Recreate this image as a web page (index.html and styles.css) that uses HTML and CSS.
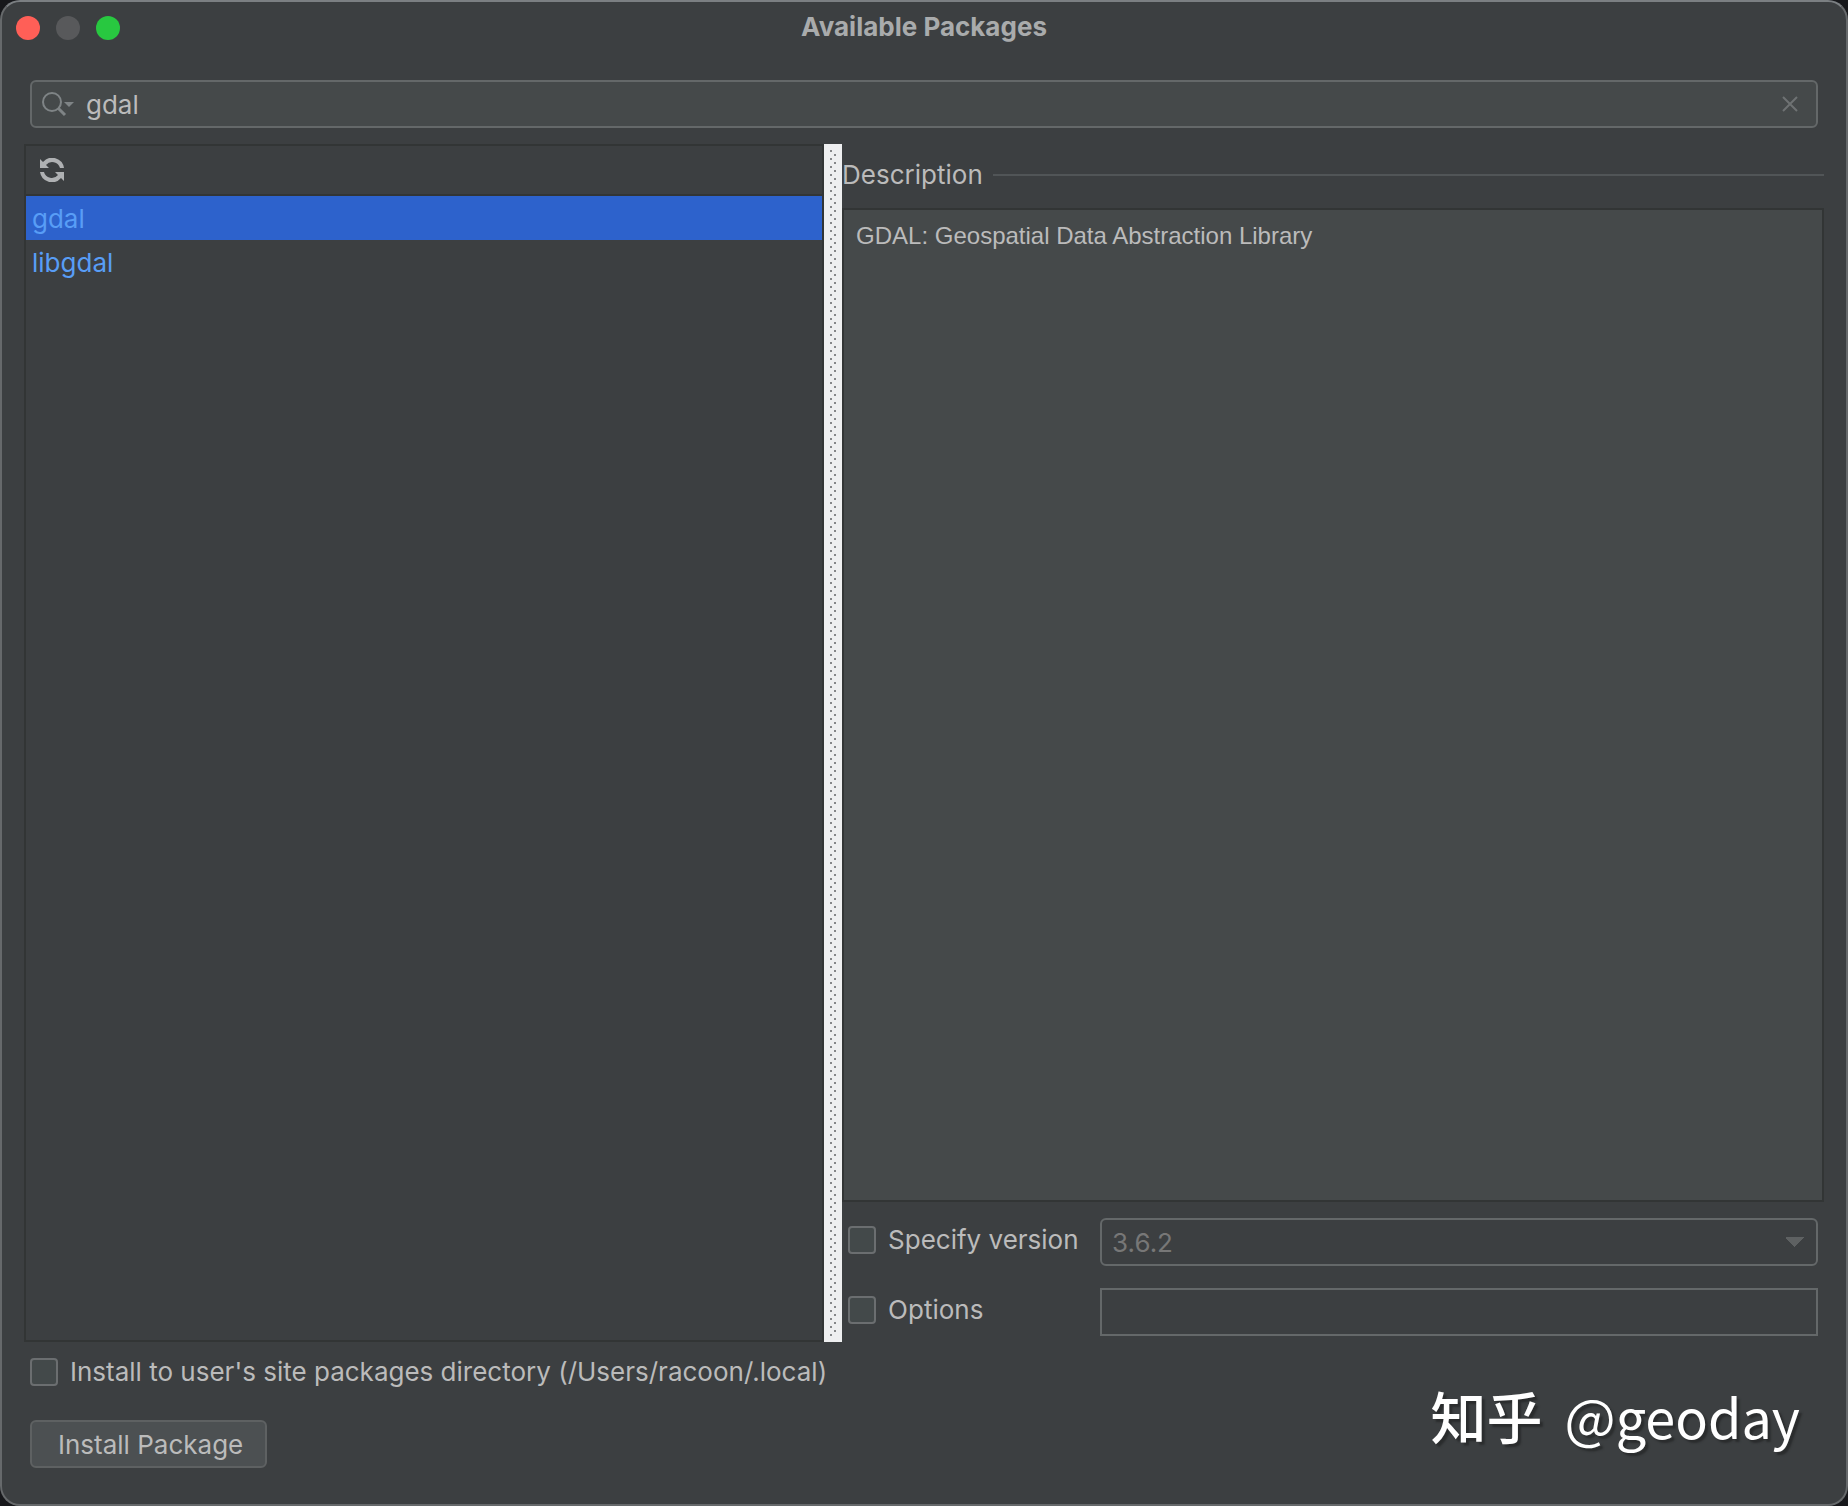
FILE: index.html
```
<!DOCTYPE html>
<html lang="en">
<head>
    <meta charset="UTF-8">
    <meta name="viewport" content="width=device-width, initial-scale=1.0">
    <title>Available Packages</title>
    <link rel="stylesheet" href="styles.css">
</head>
<body>
    <div class="window">
        <header class="title-bar">
            <div class="lights">
                <button type="button" class="light close" aria-label="Close"></button>
                <button type="button" class="light minimize" aria-label="Minimize" disabled></button>
                <button type="button" class="light zoom" aria-label="Zoom"></button>
            </div>
            <h1>Available Packages</h1>
        </header>

        <div class="search-box">
            <svg class="search-icon" width="34" height="26" viewBox="0 0 34 26">
                <circle cx="10" cy="11" r="9" fill="none" stroke="#7f8486" stroke-width="2"/>
                <path d="M16 17l7 7" stroke="#7f8486" stroke-width="3"/>
                <path d="M22 11h10l-5 5z" fill="#7f8486"/>
            </svg>
            <input type="text" id="search" value="gdal" aria-label="Search packages">
            <button type="button" class="clear-btn" aria-label="Clear">
                <svg width="16" height="16" viewBox="0 0 16 16">
                    <path d="M1 1l14 14M15 1L1 15" stroke="#6e7273" stroke-width="2"/>
                </svg>
            </button>
        </div>

        <main class="panes">
            <section class="package-pane">
                <div class="toolbar">
                    <button type="button" class="refresh-btn" aria-label="Reload list of packages">
                        <svg width="24" height="24" viewBox="0 0 24 24" fill="#afb1b3">
                            <path d="M0 1l3 3A12 12 0 0 1 24 10h-4A8 8 0 0 0 6 7l3 3H0z"/>
                            <path d="M24 23l-3-3A12 12 0 0 1 0 14h4A8 8 0 0 0 18 17l-3-3h9z"/>
                        </svg>
                    </button>
                </div>
                <ul class="package-list">
                    <li class="selected"><a href="#gdal">gdal</a></li>
                    <li><a href="#libgdal">libgdal</a></li>
                </ul>
            </section>

            <div class="splitter"></div>

            <section class="detail-pane">
                <h2>Description</h2>
                <div class="description">GDAL: Geospatial Data Abstraction Library</div>
                <div class="option-row">
                    <label class="check"><input type="checkbox" id="specify">Specify version</label>
                    <select class="field version" aria-label="Version" disabled>
                        <option>3.6.2</option>
                    </select>
                </div>
                <div class="option-row">
                    <label class="check"><input type="checkbox" id="options">Options</label>
                    <input type="text" class="field" aria-label="Options" disabled>
                </div>
            </section>
        </main>

        <footer class="actions">
            <label class="check"><input type="checkbox" id="userSite">Install to user's site packages directory (/Users/racoon/.local)</label>
            <button type="button" class="install-btn">Install Package</button>
        </footer>

        <div class="watermark"><b>知乎</b><span>@geoday</span></div>
    </div>
</body>
</html>
```
FILE: styles.css
```
* {
    margin: 0;
    padding: 0;
    box-sizing: border-box;
}

body {
    background: #17181b;
    color: #bbbbbb;
    font-family: Inter, "Noto Sans CJK SC", sans-serif;
    font-size: 26px;
    line-height: 32px;
}

button,
input,
select {
    font: inherit;
    color: inherit;
    outline: none;
}

.window {
    position: relative;
    display: flex;
    flex-direction: column;
    min-height: 100vh;
    padding: 0 22px 36px;
    background: #3c3f41;
    border: 2px solid #66696b;
    border-top-color: #7b7f82;
    border-radius: 20px;
}

/* title bar */
.title-bar {
    display: grid;
    grid-template-columns: 1fr auto 1fr;
    align-items: center;
    height: 52px;
    margin: 0 -8px 26px;
}

.lights {
    display: flex;
    gap: 16px;
}

.light {
    width: 24px;
    height: 24px;
    border: none;
    border-radius: 50%;
}

.close {
    background: #ff5f57;
}

.minimize {
    background: #58595b;
}

.zoom {
    background: #28c840;
}

.title-bar h1 {
    padding-bottom: 2px;
    font-size: 26px;
    font-weight: 700;
    color: #a9abac;
}

/* search */
.search-box {
    display: flex;
    align-items: center;
    height: 48px;
    margin: 0 6px 16px;
    padding: 0 18px 0 10px;
    background: #45494a;
    border: 2px solid #646869;
    border-radius: 6px;
}

.search-box input {
    flex: 1;
    min-width: 0;
    padding: 2px 10px 0;
    background: none;
    border: none;
}

.clear-btn,
.refresh-btn {
    display: flex;
    background: none;
    border: none;
}

/* panes */
.panes {
    flex: 1;
    display: grid;
    grid-template-columns: 44fr 18px 54fr;
}

.package-pane {
    border: 2px solid #323535;
}

.toolbar {
    display: flex;
    align-items: center;
    height: 50px;
    padding: 0 14px;
    border-bottom: 2px solid #323535;
}

.package-list {
    list-style: none;
}

.package-list li {
    height: 44px;
    padding: 0 6px;
    line-height: 46px;
}

.package-list .selected {
    background: #2d62cc;
}

.package-list a {
    color: #589df6;
    text-decoration: none;
}

/* two staggered columns of grip dots */
.splitter {
    background:
        repeating-linear-gradient(#858789 0 2px, transparent 2px 8px) 6px 6px / 2px calc(100% - 12px) no-repeat,
        repeating-linear-gradient(#858789 0 2px, transparent 2px 8px) 10px 10px / 2px calc(100% - 16px) no-repeat,
        #eeeff0;
}

.detail-pane {
    display: flex;
    flex-direction: column;
    min-width: 0;
}

.detail-pane h2 {
    display: flex;
    align-items: center;
    gap: 10px;
    height: 64px;
    padding-bottom: 2px;
    font-size: 26px;
    font-weight: 400;
}

.detail-pane h2::after {
    content: "";
    flex: 1;
    height: 2px;
    background: #515557;
}

.description {
    flex: 1;
    margin-bottom: 16px;
    padding: 10px 12px;
    background: #45494a;
    border: 2px solid #323535;
    font-family: "Liberation Sans", sans-serif;
    font-size: 24px;
}

.option-row {
    display: grid;
    grid-template-columns: 252px 1fr;
    align-items: center;
    padding: 0 6px;
    margin-bottom: 22px;
}

.option-row:last-child {
    margin-bottom: 6px;
}

.check {
    display: flex;
    align-items: center;
    gap: 12px;
    white-space: nowrap;
}

.option-row .check {
    padding-bottom: 4px;
}

.check input {
    appearance: none;
    width: 28px;
    height: 28px;
    background: #43494a;
    border: 2px solid #6b6e70;
    border-radius: 4px;
}

.check input:checked {
    background: #2d62cc;
}

.field {
    width: 100%;
    height: 48px;
    padding: 2px 10px 0;
    background: #3c3f41;
    border: 2px solid #646869;
    color: #777777;
    opacity: 1;
}

.version {
    appearance: none;
    border-radius: 6px;
    background: #3c3f41 conic-gradient(from -45deg at 50% 100%, #5e6162 90deg, transparent 0) right 12px center / 18px 10px no-repeat;
}

/* bottom actions */
.actions {
    display: flex;
    flex-direction: column;
    align-items: flex-start;
    gap: 32px;
    padding: 14px 6px 0;
}

.install-btn {
    height: 48px;
    padding: 2px 22px 0 26px;
    background: #4c5052;
    border: 2px solid #5e6162;
    border-radius: 6px;
}

.watermark {
    position: absolute;
    right: 46px;
    bottom: 52px;
    display: flex;
    align-items: baseline;
    gap: 22px;
    color: #ffffff;
    font-family: "Noto Sans CJK SC", sans-serif;
    font-size: 54px;
    line-height: 72px;
    text-shadow: 3px 3px 2px #2a2c2d;
}

.watermark b {
    font-size: 56px;
    font-weight: 500;
}
```
